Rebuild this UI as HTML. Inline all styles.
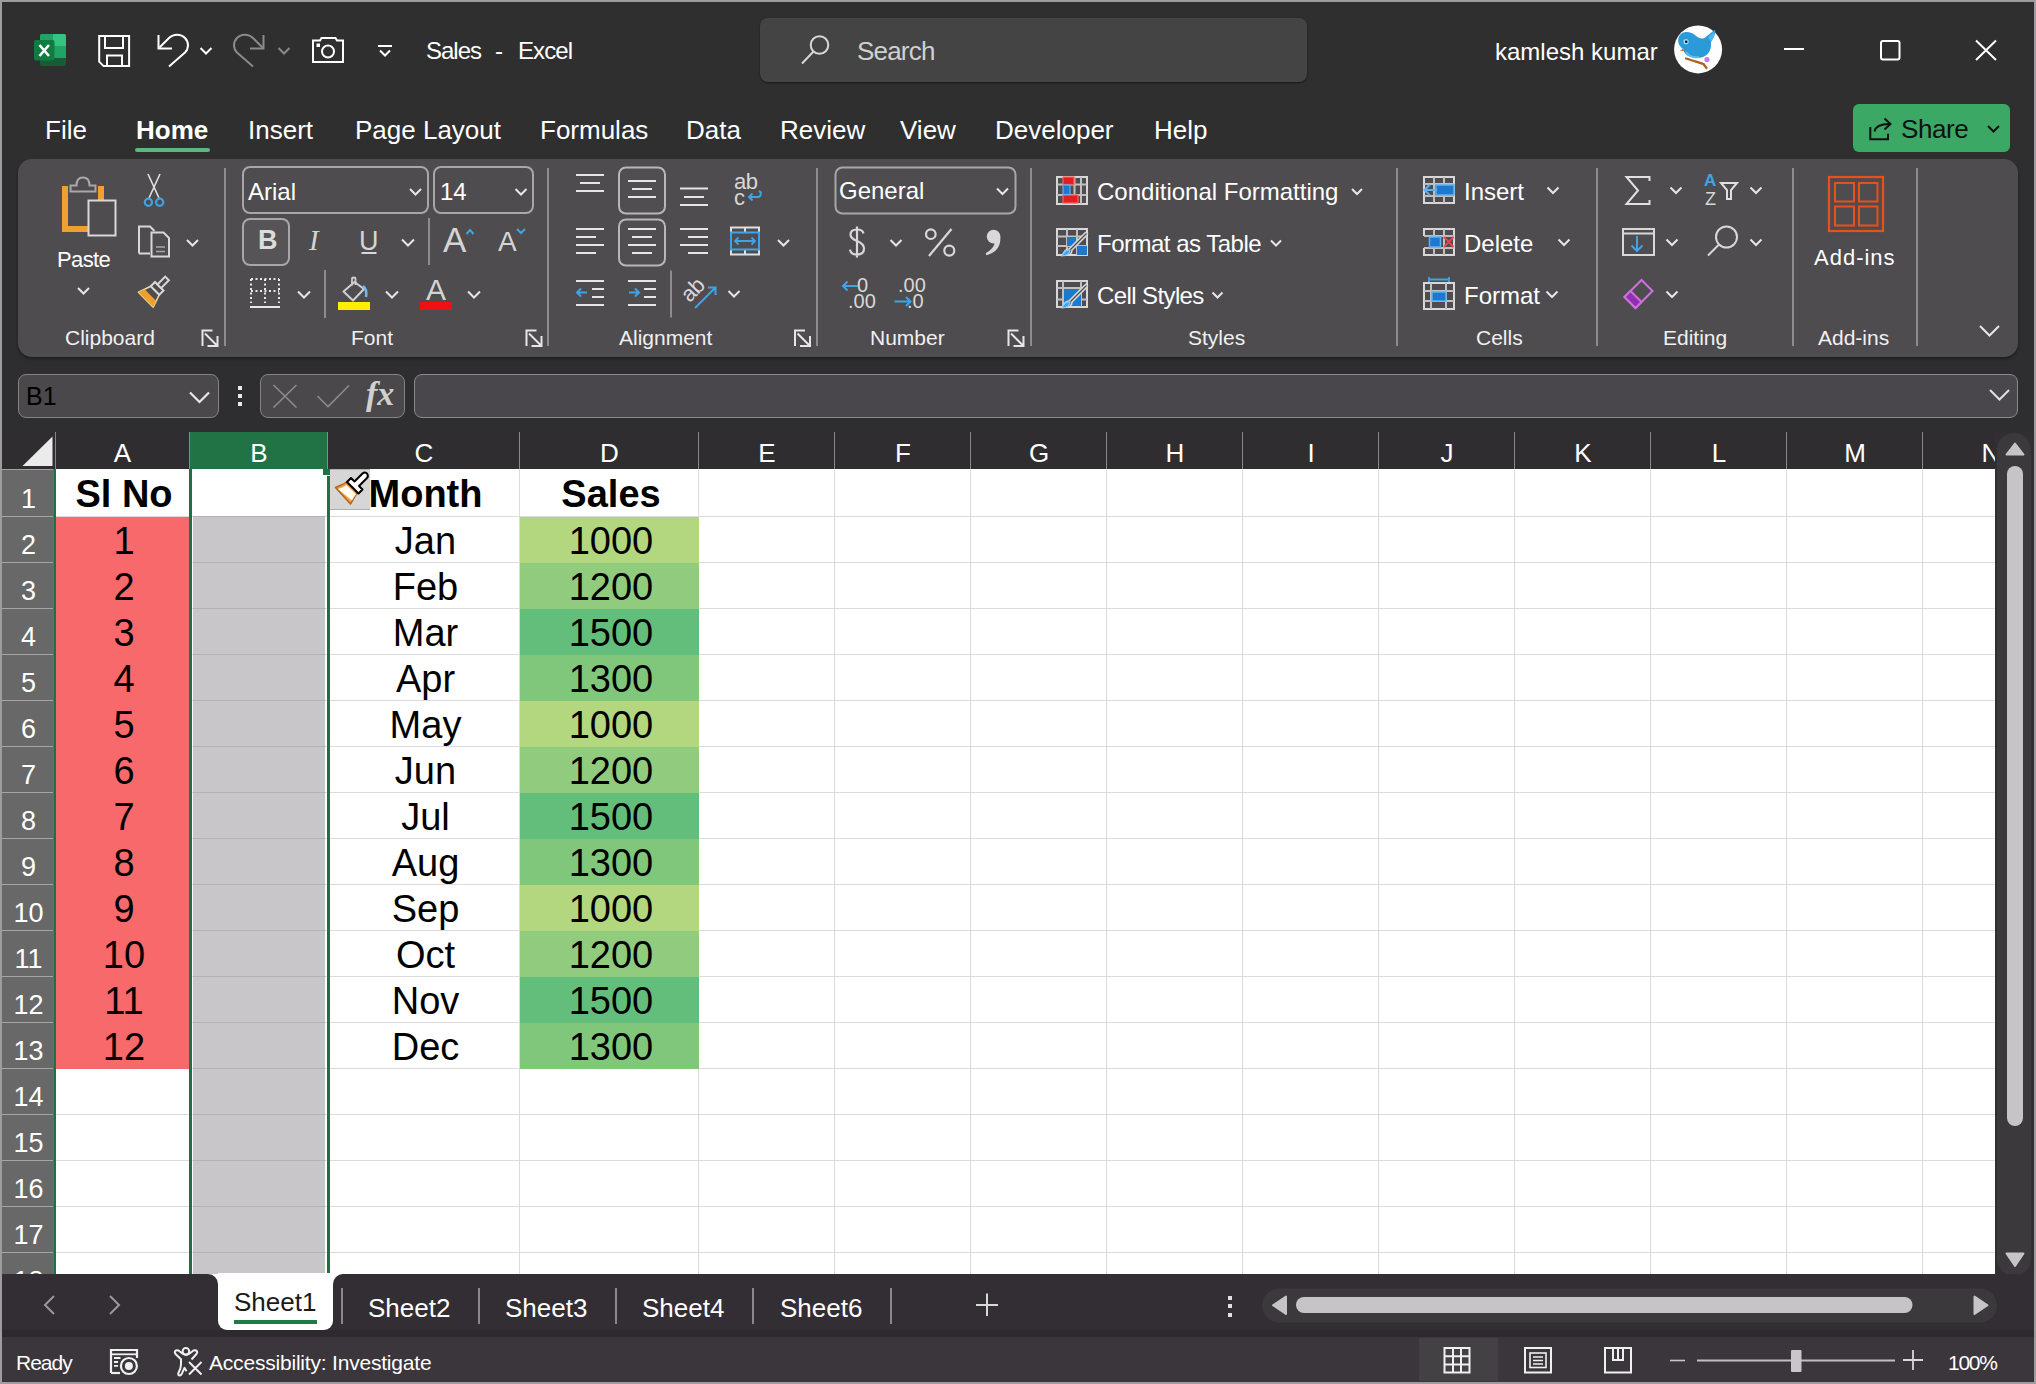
<!DOCTYPE html>
<html><head><meta charset="utf-8">
<style>
*{margin:0;padding:0;box-sizing:border-box}
html,body{width:2036px;height:1384px;overflow:hidden;background:#2e2d2f;font-family:"Liberation Sans",sans-serif;color:#fff}
.a{position:absolute}
.t{position:absolute;white-space:nowrap;line-height:1}
svg{position:absolute;overflow:visible}
#win{position:absolute;left:0;top:0;width:2036px;height:1384px;border:2px solid #9e9c9e}
.tab{position:absolute;top:117px;font-size:26px;color:#fff;line-height:1}
.grp{position:absolute;top:327px;font-size:21px;color:#f0f0f0;line-height:1}
.colh{position:absolute;top:432px;height:37px;font-size:26px;color:#fff;text-align:center;line-height:42px}
.rowh{position:absolute;left:2px;width:53px;font-size:27px;color:#fff;text-align:center}
.cell{position:absolute;font-size:38px;color:#000;text-align:center;line-height:46px}
</style></head><body>
<!-- title bar -->
<div class="a" style="left:0;top:0;width:2036px;height:160px;background:#2f2f2f"></div>
<div class="t" style="left:426px;top:39px;font-size:24px;letter-spacing:-1px">Sales</div>
<div class="t" style="left:495px;top:39px;font-size:24px">-</div>
<div class="t" style="left:518px;top:39px;font-size:24px;letter-spacing:-0.9px">Excel</div>
<div class="a" style="left:760px;top:18px;width:547px;height:64px;border-radius:8px;background:#444444;box-shadow:0 1px 2px rgba(0,0,0,.5)"></div>
<div class="t" style="left:857px;top:38px;font-size:26px;color:#d0d0d0;letter-spacing:-0.8px">Search</div>
<div class="t" style="left:1495px;top:40px;font-size:24px">kamlesh kumar</div>
<!-- tabs -->
<div class="tab" style="left:45px">File</div>
<div class="tab" style="left:136px;font-weight:bold">Home</div>
<div class="a" style="left:135px;top:148px;width:75px;height:4px;border-radius:2px;background:#5cb87c"></div>
<div class="tab" style="left:248px">Insert</div>
<div class="tab" style="left:355px">Page Layout</div>
<div class="tab" style="left:540px">Formulas</div>
<div class="tab" style="left:686px">Data</div>
<div class="tab" style="left:780px">Review</div>
<div class="tab" style="left:900px">View</div>
<div class="tab" style="left:995px">Developer</div>
<div class="tab" style="left:1154px">Help</div>
<div class="a" style="left:1853px;top:104px;width:157px;height:48px;border-radius:6px;background:#3ca865"></div>
<div class="t" style="left:1901px;top:116px;font-size:26px;color:#111;letter-spacing:-0.4px">Share</div>
<!-- ribbon bg -->
<div class="a" style="left:18px;top:159px;width:2000px;height:198px;border-radius:14px;background:#4e4c4f;box-shadow:0 2px 3px rgba(0,0,0,.35)"></div>
<div class="grp" style="left:65px">Clipboard</div>
<div class="grp" style="left:351px">Font</div>
<div class="grp" style="left:619px">Alignment</div>
<div class="grp" style="left:870px">Number</div>
<div class="grp" style="left:1188px">Styles</div>
<div class="grp" style="left:1476px">Cells</div>
<div class="grp" style="left:1663px">Editing</div>
<div class="grp" style="left:1818px">Add-ins</div>
<!-- formula bar -->
<div class="a" style="left:18px;top:374px;width:201px;height:44px;border-radius:8px;background:#4a484b;border:1px solid #858385"></div>
<div class="t" style="left:26px;top:384px;font-size:25px;color:#000">B1</div>
<div class="a" style="left:260px;top:374px;width:145px;height:44px;border-radius:8px;background:#4a484b;border:1px solid #858385"></div>
<div class="a" style="left:414px;top:374px;width:1604px;height:44px;border-radius:8px;background:#4a474c;border:1px solid #8a888a"></div>
<!--TOP-->
<svg style="left:0;top:0" width="2036" height="100" viewBox="0 0 2036 100" fill="none">
<!-- excel logo -->
<rect x="40" y="34" width="26" height="32" rx="2" fill="#185c37"/>
<rect x="40" y="34" width="26" height="24" rx="2" fill="#107c41"/>
<path d="M40 36a2 2 0 0 1 2-2h11v12h-13z" fill="#21a366"/>
<path d="M53 34h11a2 2 0 0 1 2 2v10h-13z" fill="#33c481"/>
<rect x="53" y="46" width="13" height="12" fill="#21a366"/>
<rect x="34" y="40" width="20.5" height="20.5" rx="2" fill="#107c41"/>
<path d="M39.5 45l9.5 11M49 45l-9.5 11" stroke="#fff" stroke-width="2.6"/>
<!-- save -->
<path d="M99.2 35.9h29.9v30.2h-25.5l-4.4-4.4z" stroke="#fff" stroke-width="2"/>
<path d="M105 35.9v12h18v-12" stroke="#fff" stroke-width="2"/>
<path d="M107 66v-10.5h15v10.5" stroke="#fff" stroke-width="2"/>
<!-- undo -->
<path d="M158.5 35v13.5h13.5" stroke="#fff" stroke-width="2"/>
<path d="M159.5 47.5l9.5-9.5c4.5-4.5 12-4.5 16 0c4 4.2 4 10.5 0 14.5l-16 14" stroke="#fff" stroke-width="2"/>
<path d="M200.5 48l5.5 5.5 5.5-5.5" stroke="#fff" stroke-width="2"/>
<!-- redo -->
<path d="M263.5 35v13.5h-13.5" stroke="#8a8a8a" stroke-width="2"/>
<path d="M262.5 47.5l-9.5-9.5c-4.5-4.5-12-4.5-16 0c-4 4.2-4 10.5 0 14.5l16 14" stroke="#8a8a8a" stroke-width="2"/>
<path d="M278.5 48l5.5 5.5 5.5-5.5" stroke="#8a8a8a" stroke-width="2"/>
<!-- camera -->
<path d="M313 40.5h7l1.5-2.5h14l1.5 2.5h6v21.5h-30z" stroke="#fff" stroke-width="2"/>
<circle cx="328" cy="51.5" r="6" stroke="#fff" stroke-width="2"/>
<rect x="316.5" y="43.5" width="3.5" height="3.5" fill="#fff"/>
<!-- customize -->
<path d="M378 46h14M380 50.5l5 5 5-5" stroke="#fff" stroke-width="2"/>
<!-- search icon -->
<circle cx="819.5" cy="45" r="8.8" stroke="#d8d8d8" stroke-width="2"/>
<path d="M813.5 51.5l-11.5 12" stroke="#d8d8d8" stroke-width="2"/>
<!-- avatar bird -->
<circle cx="1698.1" cy="49.4" r="24" fill="#fdfdfd"/>
<path d="M1686 58.5c6 2 13 4 17.5 5.5l3 4" stroke="#b0601e" stroke-width="2.2" stroke-linecap="round"/>
<path d="M1678.5 38C1680 31 1689 30 1695 35C1699 39 1703 40 1707 36L1715 29.5C1716 34 1713 39 1711 42C1712 52 1706 58 1697 58C1689 58 1684 54 1683 49C1679 46 1677.5 42 1678.5 38Z" fill="#2a9ad8"/>
<path d="M1708 37l6.5-6c0.5 4-2 8-3.5 11z" fill="#4fb6ee"/>
<path d="M1686 52c3 4 8 6 13 5" stroke="#58c0f0" stroke-width="2" fill="none"/>
<circle cx="1686" cy="41.7" r="2.6" fill="#9fdcf8"/>
<circle cx="1686.2" cy="41.7" r="1.3" fill="#111"/>
<path d="M1683.5 48.5l-3.5 2 3.5 0.8z" fill="#e8601c"/>
<circle cx="1707" cy="59.5" r="2.6" fill="#c87ae8"/>
<!-- window controls -->
<path d="M1784 49h20" stroke="#fff" stroke-width="2"/>
<rect x="1881" y="41" width="18.5" height="18.5" rx="2" stroke="#fff" stroke-width="2"/>
<path d="M1976 40.5l20 19.5M1996 40.5l-20 19.5" stroke="#fff" stroke-width="2"/>
<!-- share icon -->
<path d="M1870.3 127v12.3h17.7v-5.5" stroke="#111" stroke-width="2"/>
<path d="M1874.5 131.5C1875.5 126.5 1880 124 1889.5 124" stroke="#111" stroke-width="2"/>
<path d="M1884.5 118.5l6 5.5-6 5.5" stroke="#111" stroke-width="2"/>
<path d="M1988 126l5.5 5.5 5.5-5.5" stroke="#111" stroke-width="2"/>
</svg>
<!--/TOP-->
<!--RIBBON-->
<svg style="left:0;top:0" width="2036" height="400" viewBox="0 0 2036 400" fill="none" stroke-linecap="butt">
<g stroke="#e6e6e6" stroke-width="2">
<!-- chevrons (small) -->
<path d="M78 288l5.5 5.5 5.5-5.5"/>
<path d="M187 240l5.5 5.5 5.5-5.5"/>
<path d="M410 189l5.5 5.5 5.5-5.5"/>
<path d="M515.5 189l5.5 5.5 5.5-5.5"/>
<path d="M402 239.5l6 6 6-6"/>
<path d="M298 291.5l6 6 6-6"/>
<path d="M386 291.5l6 6 6-6"/>
<path d="M468 291.5l6 6 6-6"/>
<path d="M778 240l5.5 5.5 5.5-5.5"/>
<path d="M728.5 291l5.5 5.5 5.5-5.5"/>
<path d="M997 188.5l5.5 5.5 5.5-5.5"/>
<path d="M890.5 240l5.5 5.5 5.5-5.5"/>
<path d="M1352 189l5 5 5-5"/>
<path d="M1271 240.5l5 5 5-5"/>
<path d="M1212.5 292.5l5 5 5-5"/>
<path d="M1547.5 187.5l5.5 5.5 5.5-5.5"/>
<path d="M1558.5 239.5l5.5 5.5 5.5-5.5"/>
<path d="M1546.5 291.5l5.5 5.5 5.5-5.5"/>
<path d="M1670.5 187.5l5.5 5.5 5.5-5.5"/>
<path d="M1750.5 187.5l5.5 5.5 5.5-5.5"/>
<path d="M1666.5 239.5l5.5 5.5 5.5-5.5"/>
<path d="M1750.5 239.5l5.5 5.5 5.5-5.5"/>
<path d="M1666.5 291.5l5.5 5.5 5.5-5.5"/>
<path d="M1980 326l9.5 9.5 9.5-9.5"/>
<!-- dialog launchers -->
<path d="M202.5 346v-15.5h10M205 333.5l12 12M217.5 336v10h-10"/>
<path d="M526.5 346v-15.5h10M529 333.5l12 12M541.5 336v10h-10"/>
<path d="M795 346v-15.5h10M797.5 333.5l12 12M810 336v10h-10"/>
<path d="M1008.5 346v-15.5h10M1011 333.5l12 12M1023.5 336v10h-10"/>
</g>
<!-- separators -->
<g stroke="#8e8c8e" stroke-width="2">
<path d="M225 168v178M548 168v178M817 168v178M1031 168v178M1397 168v178M1597 168v178M1793 168v178M1917 168v178"/>
<path d="M429 218v47M325 270v48M671 270.5v47"/>
</g>
<!-- Paste -->
<path d="M65 186h-0v43h35" stroke="#f0a030" stroke-width="6"/>
<path d="M101 186v14" stroke="#f0a030" stroke-width="6"/>
<path d="M70.5 191.5v-6h6c0-5 2.5-8 6.5-8s6.5 3 6.5 8h6v6z" stroke="#a8a8a8" stroke-width="2"/>
<rect x="88.5" y="200.5" width="27" height="35" stroke="#d8d8d8" stroke-width="2" fill="#4e4c4f"/>
<!-- Cut -->
<g stroke="#e0e0e0" stroke-width="1.6"><path d="M148 174l11 24M160 174l-11 24"/></g>
<g stroke="#3fa3e6" stroke-width="2.2"><circle cx="148.4" cy="202.2" r="3.6"/><circle cx="159.7" cy="202.2" r="3.6"/></g>
<!-- Copy -->
<g stroke="#d8d8d8" stroke-width="2">
<path d="M139 253.5v-27h11l4.5 4.5"/><path d="M139 253.5h11"/>
<path d="M151.5 256.5v-24h12l5.5 5.5v18.5z"/>
</g>
<path d="M156 247h9M156 251.5h9" stroke="#a8a8a8" stroke-width="1.5"/>
<!-- Format painter -->
<g transform="translate(155 290.5) rotate(45)">
<path d="M-6 0h12l4.5 13h-21z" fill="#4e4c4f" stroke="#e8dc98" stroke-width="1.6" stroke-linejoin="round"/>
<path d="M-8.2 6.5h16.4l2.3 6.5h-21z" fill="#f0a030"/>
<rect x="-6" y="-6" width="12" height="6" fill="#4e4c4f" stroke="#d8d8d8" stroke-width="2"/>
<rect x="-2.6" y="-17" width="5.2" height="11" fill="#4e4c4f" stroke="#d8d8d8" stroke-width="2"/>
</g>
<!-- font boxes -->
<rect x="243" y="167" width="185" height="46" rx="7" stroke="#a8a6a8" stroke-width="2"/>
<rect x="434" y="167" width="99" height="46" rx="7" stroke="#a8a6a8" stroke-width="2"/>
<rect x="835.5" y="167.5" width="180" height="46" rx="7" stroke="#a8a6a8" stroke-width="2"/>
<rect x="243" y="219" width="46" height="46" rx="7" stroke="#a8a6a8" stroke-width="2" fill="#565456"/>
<path d="M361.5 253h15" stroke="#d8d8d8" stroke-width="2"/>
<!-- grow/shrink carets -->
<path d="M466.5 234l3.5-4 3.5 4" stroke="#3fa3e6" stroke-width="2"/>
<path d="M517 229l4 4 4-4" stroke="#3fa3e6" stroke-width="2"/>
<!-- borders -->
<path d="M251 279v24M279 279v24M251 279h28M265 279v24M251 291h28" stroke="#e8e8e8" stroke-width="2" stroke-dasharray="2 2.5"/>
<path d="M250 307h30" stroke="#e8e8e8" stroke-width="2"/>
<!-- fill color -->
<path d="M354.5 282l-11 9.5 9.5 9 11-11.5z" stroke="#d0d0d0" stroke-width="2" stroke-linejoin="round"/>
<path d="M352 285.5v-6.5c0-2 3.5-2 3.5 0v6" stroke="#d0d0d0" stroke-width="1.8"/>
<path d="M363 286c2.5 2 4 6 3 11" stroke="#7ab8e8" stroke-width="2.6"/>
<rect x="338" y="302" width="32" height="8" fill="#ffee00"/>
<rect x="420" y="302" width="32" height="8" fill="#ee1111"/>
<!-- alignment lines -->
<g stroke="#e8e4e8" stroke-width="2">
<path d="M576 175h28M580 183h20M576 191h28"/>
<path d="M628 181h28M632 189h20M628 197h28"/>
<path d="M680 188.5h28M684 197h20M680 205h28"/>
<path d="M576 229h28M576 237h20M576 245h28M576 253h20"/>
<path d="M628 229h28M632 237h20M628 245h28M632 253h20"/>
<path d="M680 229h28M688 237h20M680 245h28M688 253h20"/>
<path d="M576 281h28M592 289h12M592 297h12M576 305h28"/>
<path d="M628 281h28M644 289h12M644 297h12M628 305h28"/>
</g>
<rect x="619" y="167.5" width="46" height="46" rx="7" stroke="#b8b6b8" stroke-width="2" fill="#525052" fill-opacity="0.6"/>
<rect x="619" y="219.5" width="46" height="46" rx="7" stroke="#b8b6b8" stroke-width="2" fill="#525052" fill-opacity="0.6"/>
<g stroke="#e8e4e8" stroke-width="2">
<path d="M628 181h28M632 189h20M628 197h28"/>
<path d="M628 229h28M632 237h20M628 245h28M632 253h20"/>
</g>
<g stroke="#3fa3e6" stroke-width="2">
<path d="M577 292.5h10M581 288.5l-4 4 4 4"/>
<path d="M629 292.5h10M635 288.5l4 4-4 4"/>
</g>
<!-- wrap text -->
<path d="M749 197h9c3 0 4-5 1-6" stroke="#3fa3e6" stroke-width="2"/>
<path d="M752.5 193.5l-3.5 3.5 3.5 3.5" stroke="#3fa3e6" stroke-width="2"/>
<!-- merge -->
<rect x="731" y="227.5" width="28" height="27" stroke="#e0e0e0" stroke-width="2"/>
<path d="M745 227.5v27" stroke="#e0e0e0" stroke-width="2"/>
<rect x="731" y="232.5" width="28" height="17" stroke="#3fa3e6" stroke-width="2" fill="#4e4c4f"/>
<path d="M735 241h20M738.5 237.5l-3.5 3.5 3.5 3.5M751.5 237.5l3.5 3.5-3.5 3.5" stroke="#3fa3e6" stroke-width="1.8"/>
<!-- orientation arrow -->
<path d="M695 308l20-20M708 287.5h7.5v7.5" stroke="#3fa3e6" stroke-width="2"/>
<!-- $ % , -->
<path d="M863.5 233.5C863 230.8 860.5 229.5 857 229.5C852.8 229.5 850.5 231.6 850.5 234.6C850.5 238 853.5 239.6 857 241C861 242.6 864 244.6 864 248.6C864 252.2 861.4 254.6 857 254.6C853 254.6 850.4 252.6 850 249.6M857 226.5V257.5" stroke="#d8d8d8" stroke-width="2.2"/>
<circle cx="930.8" cy="234.2" r="4.8" stroke="#d8d8d8" stroke-width="2.2"/>
<circle cx="949.3" cy="250.6" r="5" stroke="#d8d8d8" stroke-width="2.2"/>
<path d="M951.5 229l-22.5 27" stroke="#d8d8d8" stroke-width="2.2"/>
<circle cx="993.6" cy="236.6" r="6.8" fill="#d8d8d8"/>
<path d="M1000.3 237C1001 246 996.5 252.5 986.5 255.2L985.6 253.2C991.5 250 994.5 246 994.6 242.5Z" fill="#d8d8d8"/>
<!-- decimal arrows -->
<path d="M843 286h16M847.5 281.5l-4.5 4.5 4.5 4.5" stroke="#3fa3e6" stroke-width="2"/>
<path d="M894.5 301.5h16M906 297l4.5 4.5-4.5 4.5" stroke="#3fa3e6" stroke-width="2"/>
<!-- styles icons -->
<g>
<rect x="1057" y="177" width="30" height="27" stroke="#d8d8d8" stroke-width="2"/>
<path d="M1064 177v27M1074.5 177v27M1081 177v27M1057 184.5h30M1057 195h30" stroke="#c0c0c0" stroke-width="2"/>
<rect x="1063" y="177" width="11" height="7.5" fill="#e02020" stroke="#ff6060" stroke-width="1.2"/>
<rect x="1063" y="195" width="15" height="8" fill="#e02020" stroke="#ff6060" stroke-width="1.2"/>
<rect x="1063" y="185" width="7" height="9.5" fill="#1e78d0" stroke="#60b0f0" stroke-width="1.2"/>
</g>
<g>
<rect x="1057" y="229" width="30" height="26" stroke="#d8d8d8" stroke-width="2"/>
<path d="M1067 229v26M1077 229v26M1057 236.5h30M1057 246h30" stroke="#c0c0c0" stroke-width="2"/>
<rect x="1067" y="237" width="9" height="9" fill="#1e78d0"/><rect x="1077" y="246" width="10" height="9" fill="#1e78d0"/>
<path d="M1063 255c1-4 3-6 6-6l16-16c2-2 3 0 2 2l-15 15c0 4-3 6-9 5z" fill="#4e4c4f" stroke="#d8d8d8" stroke-width="1.6"/>
<path d="M1062 256c2-5 4-7 8-6c0 3-3 6-8 6z" fill="#3fa3e6" stroke="#8fd0ff" stroke-width="1.2"/>
</g>
<g>
<rect x="1057" y="281" width="30" height="26" stroke="#d8d8d8" stroke-width="2"/>
<path d="M1063 281v26M1081 281v26M1057 288h30M1057 299.5h30" stroke="#c0c0c0" stroke-width="2"/>
<rect x="1064" y="289" width="17" height="17" fill="#1e78d0"/>
<path d="M1063 307c1-4 3-6 6-6l16-16c2-2 3 0 2 2l-15 15c0 4-3 6-9 5z" fill="#4e4c4f" stroke="#d8d8d8" stroke-width="1.6"/>
<path d="M1062 308c2-5 4-7 8-6c0 3-3 6-8 6z" fill="#3fa3e6" stroke="#8fd0ff" stroke-width="1.2"/>
</g>
<!-- cells icons -->
<g>
<rect x="1424" y="177" width="30" height="26" stroke="#d8d8d8" stroke-width="2"/>
<path d="M1434 177v26M1444 177v26M1424 184h30M1424 196h30" stroke="#c0c0c0" stroke-width="2"/>
<rect x="1436" y="185" width="18" height="10" fill="#1e78d0" stroke="#60b0f0" stroke-width="1.5"/>
<path d="M1425 190h12M1430 184.5l-5.5 5.5 5.5 5.5" stroke="#60b0f0" stroke-width="2"/>
</g>
<g>
<path d="M1424 236v-7h30v26h-30v-7" stroke="#d8d8d8" stroke-width="2"/>
<path d="M1434 229v26M1444 229v26M1424 236h30M1424 248h30" stroke="#c0c0c0" stroke-width="2"/>
<rect x="1429.5" y="237" width="11" height="10" fill="#1e78d0" stroke="#60b0f0" stroke-width="1.5"/>
<path d="M1444 237l9.5 10M1453.5 237l-9.5 10" stroke="#e84050" stroke-width="2"/>
</g>
<g>
<rect x="1424" y="283" width="30" height="26" stroke="#d8d8d8" stroke-width="2"/>
<path d="M1431 283v26M1446 283v26M1424 291h30M1424 301h30" stroke="#c0c0c0" stroke-width="2"/>
<rect x="1432" y="292" width="14" height="9" fill="#1e78d0" stroke="#60b0f0" stroke-width="1.5"/>
<path d="M1429 279.5h20M1429 277v5M1449 277v5" stroke="#3fa3e6" stroke-width="1.8"/>
</g>
<!-- editing -->
<path d="M1649.5 181v-4h-23l11.5 13.5-11.5 13.5h23v-4" stroke="#e0e0e0" stroke-width="2"/>
<path d="M1721 183h16l-6 7v9h-4v-9z" stroke="#e0e0e0" stroke-width="2"/>
<rect x="1623" y="229" width="31" height="26" stroke="#d8d8d8" stroke-width="2"/>
<path d="M1623 233.5h31" stroke="#d8d8d8" stroke-width="2"/>
<path d="M1637 236v15M1631.5 245.5l5.5 5.5 5.5-5.5" stroke="#3fa3e6" stroke-width="2"/>
<circle cx="1726.5" cy="237" r="10.5" stroke="#d8d8d8" stroke-width="2"/>
<path d="M1719 244.5l-11 11" stroke="#d8d8d8" stroke-width="2"/>
<path d="M1641.5 280l11 11-17 17-11-11z" stroke="#d070e0" stroke-width="2"/>
<path d="M1624.5 297l6-6 11 11-6 6z" fill="#9030b0" stroke="#d070e0" stroke-width="2"/>
<!-- add-ins -->
<rect x="1829" y="177" width="54" height="54" stroke="#e8501c" stroke-width="2.2"/>
<rect x="1835" y="183" width="19" height="18.5" stroke="#e8501c" stroke-width="2"/>
<rect x="1859" y="183" width="18.5" height="18.5" stroke="#e8501c" stroke-width="2"/>
<rect x="1835" y="206.5" width="19" height="19" stroke="#e8501c" stroke-width="2"/>
<rect x="1859" y="206.5" width="18.5" height="19" stroke="#e8501c" stroke-width="2"/>
</svg>
<div class="t" style="left:57px;top:249px;font-size:22px;letter-spacing:-0.6px">Paste</div>
<div class="t" style="left:248px;top:180px;font-size:24px">Arial</div>
<div class="t" style="left:440px;top:180px;font-size:24px">14</div>
<div class="t" style="left:258px;top:227px;font-size:27px;font-weight:bold;color:#dcdcdc">B</div>
<div class="t" style="left:309px;top:226px;font-size:29px;font-family:'Liberation Serif',serif;font-style:italic;color:#d4d4d4">I</div>
<div class="t" style="left:359px;top:228px;font-size:27px;color:#d4d4d4">U</div>
<div class="t" style="left:443px;top:222px;font-size:35px;color:#d4d4d4">A</div>
<div class="t" style="left:498px;top:228px;font-size:28px;color:#d4d4d4">A</div>
<div class="t" style="left:426px;top:275px;font-size:30px;color:#d4d4d4">A</div>
<div class="t" style="left:734px;top:171px;font-size:22px;color:#d8d8d8;letter-spacing:-0.5px">ab</div>
<div class="t" style="left:734px;top:187px;font-size:22px;color:#d8d8d8">c</div>
<div class="t" style="left:681px;top:279px;font-size:22px;color:#d8d8d8;transform:rotate(-45deg);transform-origin:50% 50%;letter-spacing:-0.5px">ab</div>
<div class="t" style="left:839px;top:179px;font-size:24px">General</div>
<div class="t" style="left:857px;top:275px;font-size:20px;color:#d8d8d8">0</div>
<div class="t" style="left:848px;top:291px;font-size:20px;color:#d8d8d8">.00</div>
<div class="t" style="left:898px;top:275px;font-size:20px;color:#d8d8d8">.00</div>
<div class="t" style="left:907px;top:291px;font-size:20px;color:#d8d8d8">.0</div>
<div class="t" style="left:1097px;top:180px;font-size:24px">Conditional Formatting</div>
<div class="t" style="left:1097px;top:232px;font-size:24px;letter-spacing:-0.5px">Format as Table</div>
<div class="t" style="left:1097px;top:284px;font-size:24px;letter-spacing:-0.6px">Cell Styles</div>
<div class="t" style="left:1464px;top:180px;font-size:24px">Insert</div>
<div class="t" style="left:1464px;top:232px;font-size:24px">Delete</div>
<div class="t" style="left:1464px;top:284px;font-size:24px">Format</div>
<div class="t" style="left:1704px;top:172px;font-size:17px;font-weight:bold;color:#3fa3e6">A</div>
<div class="t" style="left:1705px;top:190px;font-size:18px;color:#d8d8d8">Z</div>
<div class="t" style="left:1814px;top:247px;font-size:22px;letter-spacing:1px">Add-ins</div>
<!--/RIBBON-->
<!--FBAR-->
<svg style="left:0;top:360px" width="2036" height="120" viewBox="0 360 2036 120" fill="none">
<path d="M190 392.5l9.5 9.5 9.5-9.5" stroke="#e8e8e8" stroke-width="2.2"/>
<rect x="238" y="386" width="4" height="4" fill="#e8e8e8"/><rect x="238" y="394" width="4" height="4" fill="#e8e8e8"/><rect x="238" y="402" width="4" height="4" fill="#e8e8e8"/>
<path d="M273.5 385l23 22.5M296.5 385l-23 22.5" stroke="#8c8a8c" stroke-width="1.6"/>
<path d="M317.5 396l10.5 10.5 21-21" stroke="#8c8a8c" stroke-width="1.6"/>
<path d="M1990 390l9.5 9.5 9.5-9.5" stroke="#e0e0e0" stroke-width="2"/>
</svg>
<div class="t" style="left:366px;top:377px;font-size:34px;font-family:'Liberation Serif',serif;font-style:italic;font-weight:bold;color:#d0d0d0;letter-spacing:0px">fx</div>
<!--/FBAR-->
<!--GRID-->
<div class="a" style="left:55px;top:469px;width:1940px;height:805px;background:#fff;overflow:hidden">
<div class="a" style="left:134px;top:0;width:1px;height:805px;background:#dcdadc"></div>
<div class="a" style="left:272px;top:0;width:1px;height:805px;background:#dcdadc"></div>
<div class="a" style="left:464px;top:0;width:1px;height:805px;background:#dcdadc"></div>
<div class="a" style="left:643px;top:0;width:1px;height:805px;background:#dcdadc"></div>
<div class="a" style="left:779px;top:0;width:1px;height:805px;background:#dcdadc"></div>
<div class="a" style="left:915px;top:0;width:1px;height:805px;background:#dcdadc"></div>
<div class="a" style="left:1051px;top:0;width:1px;height:805px;background:#dcdadc"></div>
<div class="a" style="left:1187px;top:0;width:1px;height:805px;background:#dcdadc"></div>
<div class="a" style="left:1323px;top:0;width:1px;height:805px;background:#dcdadc"></div>
<div class="a" style="left:1459px;top:0;width:1px;height:805px;background:#dcdadc"></div>
<div class="a" style="left:1595px;top:0;width:1px;height:805px;background:#dcdadc"></div>
<div class="a" style="left:1731px;top:0;width:1px;height:805px;background:#dcdadc"></div>
<div class="a" style="left:1867px;top:0;width:1px;height:805px;background:#dcdadc"></div>
<div class="a" style="left:0;top:46.5px;width:1940px;height:1px;background:#dcdadc"></div>
<div class="a" style="left:0;top:92.5px;width:1940px;height:1px;background:#dcdadc"></div>
<div class="a" style="left:0;top:138.5px;width:1940px;height:1px;background:#dcdadc"></div>
<div class="a" style="left:0;top:184.5px;width:1940px;height:1px;background:#dcdadc"></div>
<div class="a" style="left:0;top:230.5px;width:1940px;height:1px;background:#dcdadc"></div>
<div class="a" style="left:0;top:276.5px;width:1940px;height:1px;background:#dcdadc"></div>
<div class="a" style="left:0;top:322.5px;width:1940px;height:1px;background:#dcdadc"></div>
<div class="a" style="left:0;top:368.5px;width:1940px;height:1px;background:#dcdadc"></div>
<div class="a" style="left:0;top:414.5px;width:1940px;height:1px;background:#dcdadc"></div>
<div class="a" style="left:0;top:460.5px;width:1940px;height:1px;background:#dcdadc"></div>
<div class="a" style="left:0;top:506.5px;width:1940px;height:1px;background:#dcdadc"></div>
<div class="a" style="left:0;top:552.5px;width:1940px;height:1px;background:#dcdadc"></div>
<div class="a" style="left:0;top:598.5px;width:1940px;height:1px;background:#dcdadc"></div>
<div class="a" style="left:0;top:644.5px;width:1940px;height:1px;background:#dcdadc"></div>
<div class="a" style="left:0;top:690.5px;width:1940px;height:1px;background:#dcdadc"></div>
<div class="a" style="left:0;top:736.5px;width:1940px;height:1px;background:#dcdadc"></div>
<div class="a" style="left:0;top:782.5px;width:1940px;height:1px;background:#dcdadc"></div>
<div class="a" style="left:0;top:828.5px;width:1940px;height:1px;background:#dcdadc"></div>
<div class="a" style="left:0;top:47.5px;width:135px;height:46.5px;background:#f8696b"></div>
<div class="a" style="left:0;top:93.5px;width:135px;height:46.5px;background:#f8696b"></div>
<div class="a" style="left:0;top:139.5px;width:135px;height:46.5px;background:#f8696b"></div>
<div class="a" style="left:0;top:185.5px;width:135px;height:46.5px;background:#f8696b"></div>
<div class="a" style="left:0;top:231.5px;width:135px;height:46.5px;background:#f8696b"></div>
<div class="a" style="left:0;top:277.5px;width:135px;height:46.5px;background:#f8696b"></div>
<div class="a" style="left:0;top:323.5px;width:135px;height:46.5px;background:#f8696b"></div>
<div class="a" style="left:0;top:369.5px;width:135px;height:46.5px;background:#f8696b"></div>
<div class="a" style="left:0;top:415.5px;width:135px;height:46.5px;background:#f8696b"></div>
<div class="a" style="left:0;top:461.5px;width:135px;height:46.5px;background:#f8696b"></div>
<div class="a" style="left:0;top:507.5px;width:135px;height:46.5px;background:#f8696b"></div>
<div class="a" style="left:0;top:553.5px;width:135px;height:46.5px;background:#f8696b"></div>
<div class="a" style="left:465px;top:47.5px;width:179px;height:46.5px;background:#b2d77f"></div>
<div class="a" style="left:465px;top:93.5px;width:179px;height:46.5px;background:#91cc7e"></div>
<div class="a" style="left:465px;top:139.5px;width:179px;height:46.5px;background:#64be7b"></div>
<div class="a" style="left:465px;top:185.5px;width:179px;height:46.5px;background:#80c77c"></div>
<div class="a" style="left:465px;top:231.5px;width:179px;height:46.5px;background:#b2d77f"></div>
<div class="a" style="left:465px;top:277.5px;width:179px;height:46.5px;background:#91cc7e"></div>
<div class="a" style="left:465px;top:323.5px;width:179px;height:46.5px;background:#64be7b"></div>
<div class="a" style="left:465px;top:369.5px;width:179px;height:46.5px;background:#80c77c"></div>
<div class="a" style="left:465px;top:415.5px;width:179px;height:46.5px;background:#b2d77f"></div>
<div class="a" style="left:465px;top:461.5px;width:179px;height:46.5px;background:#91cc7e"></div>
<div class="a" style="left:465px;top:507.5px;width:179px;height:46.5px;background:#64be7b"></div>
<div class="a" style="left:465px;top:553.5px;width:179px;height:46.5px;background:#80c77c"></div>
<div class="a" style="left:138px;top:47.5px;width:132px;height:805px;background:#c8c6c8"></div>
<div class="a" style="left:138px;top:46.5px;width:132px;height:1px;background:#b4b2b4"></div>
<div class="a" style="left:138px;top:92.5px;width:132px;height:1px;background:#b4b2b4"></div>
<div class="a" style="left:138px;top:138.5px;width:132px;height:1px;background:#b4b2b4"></div>
<div class="a" style="left:138px;top:184.5px;width:132px;height:1px;background:#b4b2b4"></div>
<div class="a" style="left:138px;top:230.5px;width:132px;height:1px;background:#b4b2b4"></div>
<div class="a" style="left:138px;top:276.5px;width:132px;height:1px;background:#b4b2b4"></div>
<div class="a" style="left:138px;top:322.5px;width:132px;height:1px;background:#b4b2b4"></div>
<div class="a" style="left:138px;top:368.5px;width:132px;height:1px;background:#b4b2b4"></div>
<div class="a" style="left:138px;top:414.5px;width:132px;height:1px;background:#b4b2b4"></div>
<div class="a" style="left:138px;top:460.5px;width:132px;height:1px;background:#b4b2b4"></div>
<div class="a" style="left:138px;top:506.5px;width:132px;height:1px;background:#b4b2b4"></div>
<div class="a" style="left:138px;top:552.5px;width:132px;height:1px;background:#b4b2b4"></div>
<div class="a" style="left:138px;top:598.5px;width:132px;height:1px;background:#b4b2b4"></div>
<div class="a" style="left:138px;top:644.5px;width:132px;height:1px;background:#b4b2b4"></div>
<div class="a" style="left:138px;top:690.5px;width:132px;height:1px;background:#b4b2b4"></div>
<div class="a" style="left:138px;top:736.5px;width:132px;height:1px;background:#b4b2b4"></div>
<div class="a" style="left:138px;top:782.5px;width:132px;height:1px;background:#b4b2b4"></div>
<div class="a" style="left:138px;top:828.5px;width:132px;height:1px;background:#b4b2b4"></div>
<div class="cell" style="left:0px;top:0.0px;width:135px;height:47.5px;line-height:50.5px;padding-left:3px;font-weight:bold;">Sl No</div>
<div class="cell" style="left:273px;top:0.0px;width:192px;height:47.5px;line-height:50.5px;padding-left:3px;font-weight:bold;">Month</div>
<div class="cell" style="left:465px;top:0.0px;width:179px;height:47.5px;line-height:50.5px;padding-left:3px;font-weight:bold;">Sales</div>
<div class="cell" style="left:0px;top:47.5px;width:135px;height:46.0px;line-height:49.0px;padding-left:3px;">1</div>
<div class="cell" style="left:273px;top:47.5px;width:192px;height:46.0px;line-height:49.0px;padding-left:3px;">Jan</div>
<div class="cell" style="left:465px;top:47.5px;width:179px;height:46.0px;line-height:49.0px;padding-left:3px;">1000</div>
<div class="cell" style="left:0px;top:93.5px;width:135px;height:46.0px;line-height:49.0px;padding-left:3px;">2</div>
<div class="cell" style="left:273px;top:93.5px;width:192px;height:46.0px;line-height:49.0px;padding-left:3px;">Feb</div>
<div class="cell" style="left:465px;top:93.5px;width:179px;height:46.0px;line-height:49.0px;padding-left:3px;">1200</div>
<div class="cell" style="left:0px;top:139.5px;width:135px;height:46.0px;line-height:49.0px;padding-left:3px;">3</div>
<div class="cell" style="left:273px;top:139.5px;width:192px;height:46.0px;line-height:49.0px;padding-left:3px;">Mar</div>
<div class="cell" style="left:465px;top:139.5px;width:179px;height:46.0px;line-height:49.0px;padding-left:3px;">1500</div>
<div class="cell" style="left:0px;top:185.5px;width:135px;height:46.0px;line-height:49.0px;padding-left:3px;">4</div>
<div class="cell" style="left:273px;top:185.5px;width:192px;height:46.0px;line-height:49.0px;padding-left:3px;">Apr</div>
<div class="cell" style="left:465px;top:185.5px;width:179px;height:46.0px;line-height:49.0px;padding-left:3px;">1300</div>
<div class="cell" style="left:0px;top:231.5px;width:135px;height:46.0px;line-height:49.0px;padding-left:3px;">5</div>
<div class="cell" style="left:273px;top:231.5px;width:192px;height:46.0px;line-height:49.0px;padding-left:3px;">May</div>
<div class="cell" style="left:465px;top:231.5px;width:179px;height:46.0px;line-height:49.0px;padding-left:3px;">1000</div>
<div class="cell" style="left:0px;top:277.5px;width:135px;height:46.0px;line-height:49.0px;padding-left:3px;">6</div>
<div class="cell" style="left:273px;top:277.5px;width:192px;height:46.0px;line-height:49.0px;padding-left:3px;">Jun</div>
<div class="cell" style="left:465px;top:277.5px;width:179px;height:46.0px;line-height:49.0px;padding-left:3px;">1200</div>
<div class="cell" style="left:0px;top:323.5px;width:135px;height:46.0px;line-height:49.0px;padding-left:3px;">7</div>
<div class="cell" style="left:273px;top:323.5px;width:192px;height:46.0px;line-height:49.0px;padding-left:3px;">Jul</div>
<div class="cell" style="left:465px;top:323.5px;width:179px;height:46.0px;line-height:49.0px;padding-left:3px;">1500</div>
<div class="cell" style="left:0px;top:369.5px;width:135px;height:46.0px;line-height:49.0px;padding-left:3px;">8</div>
<div class="cell" style="left:273px;top:369.5px;width:192px;height:46.0px;line-height:49.0px;padding-left:3px;">Aug</div>
<div class="cell" style="left:465px;top:369.5px;width:179px;height:46.0px;line-height:49.0px;padding-left:3px;">1300</div>
<div class="cell" style="left:0px;top:415.5px;width:135px;height:46.0px;line-height:49.0px;padding-left:3px;">9</div>
<div class="cell" style="left:273px;top:415.5px;width:192px;height:46.0px;line-height:49.0px;padding-left:3px;">Sep</div>
<div class="cell" style="left:465px;top:415.5px;width:179px;height:46.0px;line-height:49.0px;padding-left:3px;">1000</div>
<div class="cell" style="left:0px;top:461.5px;width:135px;height:46.0px;line-height:49.0px;padding-left:3px;">10</div>
<div class="cell" style="left:273px;top:461.5px;width:192px;height:46.0px;line-height:49.0px;padding-left:3px;">Oct</div>
<div class="cell" style="left:465px;top:461.5px;width:179px;height:46.0px;line-height:49.0px;padding-left:3px;">1200</div>
<div class="cell" style="left:0px;top:507.5px;width:135px;height:46.0px;line-height:49.0px;padding-left:3px;">11</div>
<div class="cell" style="left:273px;top:507.5px;width:192px;height:46.0px;line-height:49.0px;padding-left:3px;">Nov</div>
<div class="cell" style="left:465px;top:507.5px;width:179px;height:46.0px;line-height:49.0px;padding-left:3px;">1500</div>
<div class="cell" style="left:0px;top:553.5px;width:135px;height:46.0px;line-height:49.0px;padding-left:3px;">12</div>
<div class="cell" style="left:273px;top:553.5px;width:192px;height:46.0px;line-height:49.0px;padding-left:3px;">Dec</div>
<div class="cell" style="left:465px;top:553.5px;width:179px;height:46.0px;line-height:49.0px;padding-left:3px;">1300</div>
</div>
<div class="a" style="left:0;top:0;width:1995px;height:469px;overflow:hidden">
<div class="a" style="left:2px;top:432px;width:1993px;height:37px;background:#2f2d2f"></div>
<div class="colh" style="left:55px;width:135px;">A</div>
<div class="a" style="left:189px;top:432px;width:1px;height:37px;background:#8a888a"></div>
<div class="colh" style="left:190px;width:138px;background:#217346;">B</div>
<div class="a" style="left:327px;top:432px;width:1px;height:37px;background:#8a888a"></div>
<div class="colh" style="left:328px;width:192px;">C</div>
<div class="a" style="left:519px;top:432px;width:1px;height:37px;background:#8a888a"></div>
<div class="colh" style="left:520px;width:179px;">D</div>
<div class="a" style="left:698px;top:432px;width:1px;height:37px;background:#8a888a"></div>
<div class="colh" style="left:699px;width:136px;">E</div>
<div class="a" style="left:834px;top:432px;width:1px;height:37px;background:#8a888a"></div>
<div class="colh" style="left:835px;width:136px;">F</div>
<div class="a" style="left:970px;top:432px;width:1px;height:37px;background:#8a888a"></div>
<div class="colh" style="left:971px;width:136px;">G</div>
<div class="a" style="left:1106px;top:432px;width:1px;height:37px;background:#8a888a"></div>
<div class="colh" style="left:1107px;width:136px;">H</div>
<div class="a" style="left:1242px;top:432px;width:1px;height:37px;background:#8a888a"></div>
<div class="colh" style="left:1243px;width:136px;">I</div>
<div class="a" style="left:1378px;top:432px;width:1px;height:37px;background:#8a888a"></div>
<div class="colh" style="left:1379px;width:136px;">J</div>
<div class="a" style="left:1514px;top:432px;width:1px;height:37px;background:#8a888a"></div>
<div class="colh" style="left:1515px;width:136px;">K</div>
<div class="a" style="left:1650px;top:432px;width:1px;height:37px;background:#8a888a"></div>
<div class="colh" style="left:1651px;width:136px;">L</div>
<div class="a" style="left:1786px;top:432px;width:1px;height:37px;background:#8a888a"></div>
<div class="colh" style="left:1787px;width:136px;">M</div>
<div class="a" style="left:1922px;top:432px;width:1px;height:37px;background:#8a888a"></div>
<div class="colh" style="left:1923px;width:136px;">N</div>
<div class="a" style="left:55px;top:432px;width:1px;height:37px;background:#8a888a"></div>
</div>
<div class="a" style="left:2px;top:469px;width:53px;height:805px;background:#686868;overflow:hidden">
<div class="rowh" style="left:0;top:0.0px;height:47.5px;line-height:60.5px">1</div>
<div class="a" style="left:0;top:46.5px;width:51px;height:1px;background:#a4a4a4"></div>
<div class="rowh" style="left:0;top:47.5px;height:46.0px;line-height:56.0px">2</div>
<div class="a" style="left:0;top:92.5px;width:51px;height:1px;background:#a4a4a4"></div>
<div class="rowh" style="left:0;top:93.5px;height:46.0px;line-height:56.0px">3</div>
<div class="a" style="left:0;top:138.5px;width:51px;height:1px;background:#a4a4a4"></div>
<div class="rowh" style="left:0;top:139.5px;height:46.0px;line-height:56.0px">4</div>
<div class="a" style="left:0;top:184.5px;width:51px;height:1px;background:#a4a4a4"></div>
<div class="rowh" style="left:0;top:185.5px;height:46.0px;line-height:56.0px">5</div>
<div class="a" style="left:0;top:230.5px;width:51px;height:1px;background:#a4a4a4"></div>
<div class="rowh" style="left:0;top:231.5px;height:46.0px;line-height:56.0px">6</div>
<div class="a" style="left:0;top:276.5px;width:51px;height:1px;background:#a4a4a4"></div>
<div class="rowh" style="left:0;top:277.5px;height:46.0px;line-height:56.0px">7</div>
<div class="a" style="left:0;top:322.5px;width:51px;height:1px;background:#a4a4a4"></div>
<div class="rowh" style="left:0;top:323.5px;height:46.0px;line-height:56.0px">8</div>
<div class="a" style="left:0;top:368.5px;width:51px;height:1px;background:#a4a4a4"></div>
<div class="rowh" style="left:0;top:369.5px;height:46.0px;line-height:56.0px">9</div>
<div class="a" style="left:0;top:414.5px;width:51px;height:1px;background:#a4a4a4"></div>
<div class="rowh" style="left:0;top:415.5px;height:46.0px;line-height:56.0px">10</div>
<div class="a" style="left:0;top:460.5px;width:51px;height:1px;background:#a4a4a4"></div>
<div class="rowh" style="left:0;top:461.5px;height:46.0px;line-height:56.0px">11</div>
<div class="a" style="left:0;top:506.5px;width:51px;height:1px;background:#a4a4a4"></div>
<div class="rowh" style="left:0;top:507.5px;height:46.0px;line-height:56.0px">12</div>
<div class="a" style="left:0;top:552.5px;width:51px;height:1px;background:#a4a4a4"></div>
<div class="rowh" style="left:0;top:553.5px;height:46.0px;line-height:56.0px">13</div>
<div class="a" style="left:0;top:598.5px;width:51px;height:1px;background:#a4a4a4"></div>
<div class="rowh" style="left:0;top:599.5px;height:46.0px;line-height:56.0px">14</div>
<div class="a" style="left:0;top:644.5px;width:51px;height:1px;background:#a4a4a4"></div>
<div class="rowh" style="left:0;top:645.5px;height:46.0px;line-height:56.0px">15</div>
<div class="a" style="left:0;top:690.5px;width:51px;height:1px;background:#a4a4a4"></div>
<div class="rowh" style="left:0;top:691.5px;height:46.0px;line-height:56.0px">16</div>
<div class="a" style="left:0;top:736.5px;width:51px;height:1px;background:#a4a4a4"></div>
<div class="rowh" style="left:0;top:737.5px;height:46.0px;line-height:56.0px">17</div>
<div class="a" style="left:0;top:782.5px;width:51px;height:1px;background:#a4a4a4"></div>
<div class="rowh" style="left:0;top:783.5px;height:46.0px;line-height:56.0px">18</div>
<div class="a" style="left:0;top:828.5px;width:51px;height:1px;background:#a4a4a4"></div>
<div class="a" style="left:0;top:0;width:51px;height:1px;background:#a4a4a4"></div>
</div>
<!--/GRID-->
<!--OVERLAY-->
<svg style="left:0;top:420px" width="60" height="60" viewBox="0 420 60 60"><path d="M52.5 436.5v29.5h-30z" fill="#ebebeb"/></svg>
<!-- selection borders column B -->
<div class="a" style="left:189px;top:469px;width:3px;height:805px;background:#1e7145"></div>
<div class="a" style="left:327px;top:476px;width:3px;height:798px;background:#1e7145"></div>
<div class="a" style="left:323px;top:469px;width:7px;height:6px;background:#1e7145"></div>
<div class="a" style="left:54px;top:469px;width:2px;height:805px;background:#1e7145"></div>
<!-- format painter cursor -->
<div class="a" style="left:330px;top:469px;width:40px;height:41px;background:#d6d6d6;border-top:1px solid #b0b0b0;border-bottom:1px solid #b0b0b0"></div>
<svg style="left:0;top:0" width="2036" height="600" viewBox="0 0 2036 600" fill="none">
<path d="M335.5 487.5c4-2 8-3 11-5.5l11 11c-3 3-5 8-7 11z" fill="#f5a040" stroke="#b8651a" stroke-width="1.6" stroke-linejoin="round"/>
<path d="M338 489c3 -1 6-2 8.5-4l9.5 9.5c-2 2-3 4-4 6z" fill="#fffdf0"/>
<path d="M347 482l4-4 3.5 3.5 8-8c1.5-1.5 3.5-1.5 4.5 0s1.5 3 0 4.5l-8 8 3.5 3.5-4 4z" fill="#fff" stroke="#000" stroke-width="2" stroke-linejoin="round"/>
</svg>
<!-- vertical scrollbar -->
<div class="a" style="left:1995px;top:432px;width:38px;height:842px;background:#322e33"></div>
<div class="a" style="left:1997px;top:433px;width:34px;height:843px;border-radius:17px;background:#3b393c"></div>
<div class="a" style="left:2007px;top:466px;width:16px;height:660px;border-radius:8px;background:#c6c4c6"></div>
<svg style="left:0;top:0" width="2036" height="1384" viewBox="0 0 2036 1384" fill="none">
<path d="M2015 443.5l8.5 11h-17z" fill="#c6c4c6" stroke="#c6c4c6" stroke-width="2" stroke-linejoin="round"/>
<path d="M2015 1266l8.5-12.5h-17z" fill="#c6c4c6" stroke="#c6c4c6" stroke-width="2" stroke-linejoin="round"/>
</svg>
<!--/OVERLAY-->
<!--BOTTOM-->
<div class="a" style="left:0;top:1274px;width:2036px;height:64px;background:#322e33"></div>
<div class="a" style="left:2px;top:1274px;width:216px;height:64px;background:#322e33;border-radius:0 10px 0 0"></div>

<div class="a" style="left:208px;top:1274px;width:10px;height:10px;background:#fff"></div>
<div class="a" style="left:198px;top:1274px;width:20px;height:20px;background:#322e33;border-radius:0 10px 0 0"></div>
<div class="a" style="left:333px;top:1274px;width:10px;height:10px;background:#fff"></div>
<div class="a" style="left:333px;top:1274px;width:20px;height:20px;background:#322e33;border-radius:10px 0 0 0"></div>
<div class="a" style="left:218px;top:1273px;width:115px;height:57px;background:#fff;border-radius:0 0 9px 9px"></div>
<div class="t" style="left:234px;top:1289px;font-size:26px;color:#1a1a1a">Sheet1</div>
<div class="a" style="left:234px;top:1320px;width:83px;height:4px;background:#1d7b45"></div>
<div class="t" style="left:368px;top:1295px;font-size:26px">Sheet2</div>
<div class="t" style="left:505px;top:1295px;font-size:26px">Sheet3</div>
<div class="t" style="left:642px;top:1295px;font-size:26px">Sheet4</div>
<div class="t" style="left:780px;top:1295px;font-size:26px">Sheet6</div>
<svg style="left:0;top:1260px" width="2036" height="124" viewBox="0 1260 2036 124" fill="none">
<path d="M54 1296l-9 9 9 9M110 1296l9 9-9 9" stroke="#9a989a" stroke-width="2"/>
<path d="M342 1288v36M479 1288v36M616 1288v36M753 1288v36M891 1288v36" stroke="#8a888a" stroke-width="2"/>
<path d="M987 1293.5v22.5M976 1305h22" stroke="#d8d8d8" stroke-width="2"/>
<rect x="1228" y="1296" width="4" height="4" fill="#e0e0e0"/><rect x="1228" y="1304" width="4" height="4" fill="#e0e0e0"/><rect x="1228" y="1313" width="4" height="4" fill="#e0e0e0"/>
<rect x="1262" y="1288.5" width="735" height="34" rx="17" fill="#3b393c"/>
<rect x="1296" y="1297" width="616.5" height="16" rx="8" fill="#c6c4c6"/>
<path d="M1286 1296.5v17.5l-13-8.75z" fill="#c6c4c6" stroke="#c6c4c6" stroke-width="2" stroke-linejoin="round"/>
<path d="M1974.5 1296.5v17.5l13-8.75z" fill="#c6c4c6" stroke="#c6c4c6" stroke-width="2" stroke-linejoin="round"/>
</svg>
<div class="a" style="left:0;top:1330px;width:2036px;height:7px;background:#2d292e"></div>
<div class="a" style="left:0;top:1337px;width:2036px;height:47px;background:#3a363b"></div>
<div class="a" style="left:1419px;top:1338px;width:79px;height:43px;background:#434144"></div>
<div class="t" style="left:16px;top:1352px;font-size:21px;letter-spacing:-1px">Ready</div>
<div class="t" style="left:209px;top:1352px;font-size:21px;letter-spacing:-0.2px">Accessibility: Investigate</div>
<div class="t" style="left:1948px;top:1352px;font-size:21px;letter-spacing:-1.3px">100%</div>
<svg style="left:0;top:1338px" width="2036" height="46" viewBox="0 1338 2036 46" fill="none">
<path d="M111 1373v-23h26v8" stroke="#f0f0f0" stroke-width="2.2"/>
<path d="M111 1354.3h26" stroke="#f0f0f0" stroke-width="1.8"/>
<path d="M111 1373h9" stroke="#f0f0f0" stroke-width="2.2"/>
<path d="M114 1358h6.5M114 1362h4M114 1365.8h4" stroke="#f0f0f0" stroke-width="1.8"/>
<circle cx="128.9" cy="1366" r="8" stroke="#f0f0f0" stroke-width="2.2"/><circle cx="128.9" cy="1366" r="4" fill="#f0f0f0"/>
<circle cx="185.9" cy="1351.3" r="3.3" stroke="#f0f0f0" stroke-width="2"/>
<path d="M191.5 1359.5l4.5-5c2.5-2.5 0.5-5-2.5-4l-4.5 3.5c-2 1.3-4 1.3-6 0l-4.5-3.5c-3-1-5 1.5-2.5 4l5 4.8v5c0 3-1 6-2.5 8.5c-1.2 2.5 1.8 3.6 3 1.5l3-6.5 2 3.5" stroke="#f0f0f0" stroke-width="2" stroke-linejoin="round"/>
<path d="M189 1362l12.5 12.5M201.5 1362l-12.5 12.5" stroke="#f0f0f0" stroke-width="2"/>
<rect x="1444.5" y="1348" width="25" height="24.5" stroke="#f0f0f0" stroke-width="2"/>
<path d="M1453 1348v24.5M1461 1348v24.5M1444.5 1356.2h25M1444.5 1364.4h25" stroke="#f0f0f0" stroke-width="2"/>
<rect x="1525" y="1348" width="26" height="24.5" stroke="#f0f0f0" stroke-width="2"/>
<rect x="1530" y="1353" width="16" height="14.5" stroke="#f0f0f0" stroke-width="1.6"/>
<path d="M1533 1357h10M1533 1360.5h10M1533 1364h10" stroke="#f0f0f0" stroke-width="1.5"/>
<rect x="1605" y="1348" width="26" height="24.5" stroke="#f0f0f0" stroke-width="2"/>
<path d="M1613 1348v12h10v-12M1618 1348v12" stroke="#f0f0f0" stroke-width="2"/>
<path d="M1670 1360.5h15" stroke="#c8c8c8" stroke-width="1.6"/>
<path d="M1697 1360.5h198" stroke="#c0bec0" stroke-width="2"/>
<rect x="1791" y="1350" width="10.5" height="22" rx="1" fill="#c8c6c8"/>
<path d="M1913 1350v20M1903 1360h20" stroke="#d8d8d8" stroke-width="1.8"/>
</svg>
<!--/BOTTOM-->
<div id="win"></div>
</body></html>
